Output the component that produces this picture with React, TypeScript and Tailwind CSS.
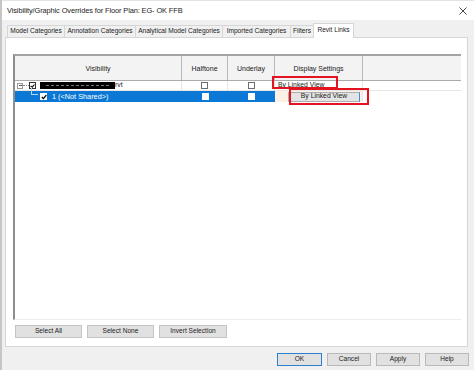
import React from "react";

function Check({ on = false, white = false }: { on?: boolean; white?: boolean }) {
  return (
    <div
      className={
        white
          ? "w-[7px] h-[7px] bg-white flex items-center justify-center"
          : "w-[7px] h-[7px] bg-white border border-[#333] flex items-center justify-center"
      }
    >
      {on && (
        <svg width="6" height="6" viewBox="0 0 6 6">
          <path d="M0.8 3 L2.4 4.6 L5.3 1.2" stroke="#000" strokeWidth="1.3" fill="none" />
        </svg>
      )}
    </div>
  );
}

function Box({ white = false }: { white?: boolean }) {
  return white ? (
    <div className="w-[7px] h-[7px] bg-white" />
  ) : (
    <div className="w-[7px] h-[7px] bg-white border border-[#6d6d6d]" />
  );
}

const tabs = [
  { label: "Model Categories", w: "w-[58px]" },
  { label: "Annotation Categories", w: "w-[72px]" },
  { label: "Analytical Model Categories", w: "w-[88px]" },
  { label: "Imported Categories", w: "w-[69px]" },
  { label: "Filters", w: "w-[24px]" },
];

export default function App() {
  return (
    <div className="w-[474px] h-[370px] bg-[#f0f0f0] relative overflow-hidden text-[#222] font-[Liberation_Sans,Arial,sans-serif] text-[7px] leading-none border-l-2 border-[#c6c6c6]">
      {/* title bar */}
      <div className="h-[20px] bg-white flex items-center justify-between pl-[5px] pr-[7px] border-t border-[#e4e4e4]">
        <span className="text-[7.4px] tracking-[-0.1px]">Visibility/Graphic Overrides for Floor Plan: EG- OK FFB</span>
        <svg width="8" height="8" viewBox="0 0 8 8">
          <path d="M0.5 0.5 L7.5 7.5 M7.5 0.5 L0.5 7.5" stroke="#333" strokeWidth="0.9" />
        </svg>
      </div>

      {/* tabs */}
      <div className="h-[17px] pl-[5px] flex items-end">
        {tabs.map((t) => (
          <div
            key={t.label}
            className={`${t.w} h-[12px] border border-b-0 border-[#d6d6d6] -mr-px bg-[#f0f0f0] flex items-center justify-center whitespace-nowrap text-[6.6px]`}
          >
            {t.label}
          </div>
        ))}
        <div className="w-[41px] h-[15px] border border-b-0 border-[#d6d6d6] bg-white flex items-center justify-center whitespace-nowrap text-[6.6px] relative z-10 -mb-px pb-[2px]">
          Revit Links
        </div>
      </div>

      {/* panel */}
      <div className="ml-[3px] w-[463px] h-[310px] bg-white border border-[#d6d6d6] pt-[16px] pl-[7px] flex flex-col">
        {/* grid */}
        <div className="w-[448px] h-[266px] border-l-2 border-t-2 border-l-[#8e8e8e] border-t-[#a3a3a3] border-b border-b-[#ececec] flex flex-col">
          {/* header */}
          <div className="h-[25px] bg-[#f3f3f3] border-b border-[#ababab] flex text-[7px]">
            <div className="w-[167px] border-r border-[#b9b9b9] flex items-center justify-center">Visibility</div>
            <div className="w-[46px] border-r border-[#b9b9b9] flex items-center justify-center">Halftone</div>
            <div className="w-[47px] border-r border-[#b9b9b9] flex items-center justify-center">Underlay</div>
            <div className="w-[88px] border-r border-[#b9b9b9] flex items-center justify-center">Display Settings</div>
            <div className="flex-1" />
          </div>
          {/* row 1 */}
          <div className="h-[10px] flex border-b border-[#e6e6e6]">
            <div className="w-[167px] border-r border-[#e6e6e6] flex items-center">
              <div className="ml-[2px] w-[6px] h-[6px] border border-[#9a9a9a] flex items-center justify-center">
                <div className="w-[3px] h-px bg-[#555]" />
              </div>
              <div className="w-[6px] h-px border-t border-dotted border-[#888]" />
              <Check on />
              <div className="ml-[4px] w-[75px] h-[7px] bg-black flex items-center px-[6px]">
                <div className="w-full border-t border-dashed border-[#777]" />
              </div>
              <span className="text-[6.8px]">rvt</span>
            </div>
            <div className="w-[46px] border-r border-[#e6e6e6] flex items-center justify-center">
              <Box />
            </div>
            <div className="w-[47px] border-r border-[#e6e6e6] flex items-center justify-center">
              <Box />
            </div>
            <div className="w-[88px] border-r border-[#e6e6e6] flex items-center pl-[3px] text-[6.8px]">By Linked View</div>
            <div className="flex-1" />
          </div>
          {/* row 2 */}
          <div className="h-[11px] flex">
            <div className="w-[167px] bg-[#0a78d4] flex items-center text-white relative">
              <div className="absolute left-[16px] top-[-4px] w-[7px] h-[8px] border-l border-b border-[#b9d6ef]" />
              <div className="ml-[25px]">
                <Check on white />
              </div>
              <span className="ml-[5px] text-[7.3px]">1 (&lt;Not Shared&gt;)</span>
            </div>
            <div className="w-[46px] bg-[#0a78d4] flex items-center justify-center">
              <Box white />
            </div>
            <div className="w-[47px] bg-[#0a78d4] flex items-center justify-center">
              <Box white />
            </div>
            <div className="w-[88px] bg-[#fdf1e6] flex items-center pl-[13px] border-r border-[#e6e6e6]">
              <div className="w-[72px] h-[10px] bg-[#e4e4e4] border border-[#adadad] border-r-[#3d8fd6] flex items-center justify-center text-[6.8px]">
                By Linked View
              </div>
            </div>
            <div className="flex-1" />
          </div>
        </div>

        {/* select buttons */}
        <div className="mt-[5px] flex gap-[5px] pl-[2px]">
          <button className="w-[67px] h-[13px] bg-[#e1e1e1] border border-[#c4c4c4] text-[6.6px]">Select All</button>
          <button className="w-[67px] h-[13px] bg-[#e1e1e1] border border-[#c4c4c4] text-[6.6px]">Select None</button>
          <button className="w-[68px] h-[13px] bg-[#e1e1e1] border border-[#c4c4c4] text-[6.6px]">Invert Selection</button>
        </div>
      </div>

      {/* footer */}
      <div className="h-[23px] flex items-center justify-end gap-[5px] pr-[5px] pt-[1px]">
        <button className="w-[45px] h-[13px] bg-[#e1e1e1] border border-[#2b7fd0] text-[6.6px]">OK</button>
        <button className="w-[44px] h-[13px] bg-[#e1e1e1] border border-[#b9b9b9] text-[6.6px]">Cancel</button>
        <button className="w-[44px] h-[13px] bg-[#e1e1e1] border border-[#b9b9b9] text-[6.6px]">Apply</button>
        <button className="w-[44px] h-[13px] bg-[#e1e1e1] border border-[#b9b9b9] text-[6.6px]">Help</button>
      </div>

      {/* red annotation boxes */}
      <div className="absolute left-[270px] top-[76px] w-[66px] h-[13px] border-2 border-[#e3141f]" />
      <div className="absolute left-[287px] top-[88px] w-[80px] h-[17px] border-2 border-[#e3141f]" />
    </div>
  );
}
